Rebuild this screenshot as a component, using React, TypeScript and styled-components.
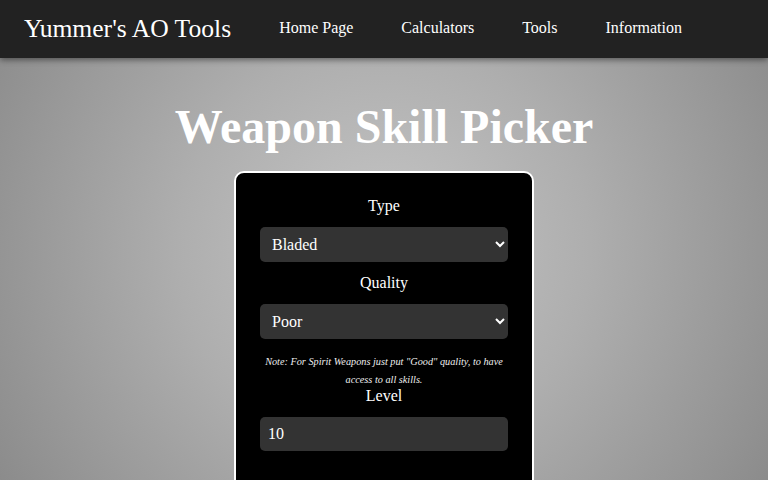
import React, { useState } from 'react'
import styled, { createGlobalStyle } from 'styled-components'

const serif = '"Liberation Serif", "Times New Roman", serif'

const GlobalStyle = createGlobalStyle`
  html, body {
    margin: 0;
    padding: 0;
    height: 100%;
  }
  body {
    font-family: ${serif};
    background: radial-gradient(circle at 50% 52%, #c6c6c6 0%, #aeaeae 45%, #8a8a8a 100%);
    background-attachment: fixed;
    color: #fff;
    overflow: hidden;
  }
`

const NavBar = styled.nav`
  display: flex;
  align-items: center;
  height: 58px;
  padding: 0 24px;
  background: #222;
  box-shadow: 0 2px 6px rgba(0, 0, 0, 0.45);
`

const Brand = styled.a`
  font-size: 25.6px;
  color: #fff;
  text-decoration: none;
  margin-right: 24px;
`

const NavLinks = styled.ul`
  display: flex;
  list-style: none;
  margin: 0 0 3px;
  padding: 0;
`

const NavLink = styled.li`
  font-size: 16px;
  color: #fff;
  padding: 0 24px;
  cursor: pointer;
`

const Main = styled.main`
  display: flex;
  flex-direction: column;
  align-items: center;
`

const Title = styled.h1`
  font-size: 48px;
  font-weight: bold;
  margin: 41px 0 17px;
  line-height: 1.15;
`

const Card = styled.div`
  display: flex;
  flex-direction: column;
  align-items: center;
  width: 248px;
  padding: 24px 24px 40px;
  background: #000;
  border: 2px solid #fff;
  border-radius: 10px;
`

const Label = styled.label`
  font-size: 16px;
  line-height: 18px;
  margin-bottom: 12px;
`

const Select = styled.select`
  width: 100%;
  height: 35px;
  margin-bottom: 12px;
  padding: 0 8px;
  font-family: ${serif};
  font-size: 16px;
  color: #fff;
  background: #333;
  border: none;
  border-radius: 5px;
  outline: none;
`

const Input = styled.input`
  box-sizing: border-box;
  width: 100%;
  height: 34px;
  padding: 0 8px;
  font-family: ${serif};
  font-size: 16px;
  color: #fff;
  background: #333;
  border: none;
  border-radius: 5px;
  outline: none;
`

const Note = styled.p`
  margin: 2px 0 -2px;
  font-family: ${serif};
  font-size: 10.25px;
  font-style: italic;
  line-height: 18px;
  text-align: center;
  color: #eee;
`

const types = ['Bladed', 'Blunt', 'Ranged', 'Magic']
const qualities = ['Poor', 'Normal', 'Good', 'Excellent']

const App = () => {
  const [type, setType] = useState('Bladed')
  const [quality, setQuality] = useState('Poor')
  const [level, setLevel] = useState('10')

  return (
    <>
      <GlobalStyle />
      <NavBar>
        <Brand>Yummer's AO Tools</Brand>
        <NavLinks>
          <NavLink>Home Page</NavLink>
          <NavLink>Calculators</NavLink>
          <NavLink>Tools</NavLink>
          <NavLink>Information</NavLink>
        </NavLinks>
      </NavBar>
      <Main>
        <Title>Weapon Skill Picker</Title>
        <Card>
          <Label>Type</Label>
          <Select value={type} onChange={(e) => setType(e.target.value)}>
            {types.map((t) => <option key={t}>{t}</option>)}
          </Select>
          <Label>Quality</Label>
          <Select value={quality} onChange={(e) => setQuality(e.target.value)}>
            {qualities.map((q) => <option key={q}>{q}</option>)}
          </Select>
          <Note>Note: For Spirit Weapons just put "Good" quality, to have access to all skills.</Note>
          <Label>Level</Label>
          <Input type='number' value={level} onChange={(e) => setLevel(e.target.value)} />
        </Card>
      </Main>
    </>
  )
}

export default App
